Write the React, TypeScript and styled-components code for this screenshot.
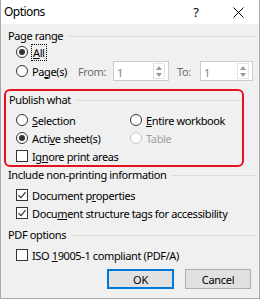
import React from "react";
import styled, { createGlobalStyle } from "styled-components";

const Global = createGlobalStyle`
  html, body { margin: 0; padding: 0; background: #ffffff; }
  body { font-family: "Noto Sans", "Open Sans", sans-serif; font-size: 11px; letter-spacing: -0.38px; color: #000; }
  * { box-sizing: border-box; }
`;

const Window = styled.div`
  width: 260px;
  height: 299px;
  background: #f0f0f0;
  border: 1px solid #a9a9a9;
  border-top: none;
  display: flex;
  flex-direction: column;
`;

const TitleBar = styled.div`
  height: 24px;
  background: #ffffff;
  display: flex;
  align-items: center;
  padding-left: 3px;
  flex: none;
`;

const Title = styled.div`
  flex: 1;
  font-size: 12px;
  letter-spacing: -0.55px;
  line-height: 14px;
`;

const TitleBtn = styled.div<{ $w: number }>`
  width: ${(p) => p.$w}px;
  height: 24px;
  display: flex;
  align-items: center;
  justify-content: center;
  font-size: 13px;
`;

const Body = styled.div`
  display: flex;
  flex-direction: column;
  padding: 5px 3px 0 6px;
`;

const GroupHeader = styled.div<{ $mt?: number }>`
  height: 14px;
  margin-top: ${(p) => p.$mt ?? 0}px;
  display: flex;
  align-items: center;
  gap: 5px;
  padding-left: 1px;
  line-height: 14px;
  white-space: nowrap;
  &::after {
    content: "";
    flex: 1;
    height: 1px;
    background: #dcdcdc;
    margin-top: 1px;
  }
`;

const Row = styled.div<{ $mt?: number; $h?: number }>`
  height: ${(p) => p.$h ?? 18}px;
  margin-top: ${(p) => p.$mt ?? 0}px;
  display: flex;
  align-items: center;
  padding-left: 9px;
  white-space: nowrap;
`;

const Slot = styled.div<{ $w: number }>`
  width: ${(p) => p.$w}px;
  flex: none;
  display: flex;
  align-items: center;
`;

const Highlight = styled.div`
  margin: 8px 0 0 -3px;
  width: 240px;
  border: 2px solid #e81123;
  border-radius: 6px;
  padding: 2px 0 0 2px;
  display: flex;
  flex-direction: column;
`;

const PubGrid = styled.div`
  margin-top: 4px;
  display: grid;
  grid-template-columns: 114px 112px;
  grid-auto-rows: 18px;
  padding-left: 8px;
`;

const Opt = styled.label<{ $disabled?: boolean }>`
  display: flex;
  align-items: center;
  gap: 4px;
  white-space: nowrap;
  color: ${(p) => (p.$disabled ? "#a0a0a0" : "#000")};
`;

const RadioCircle = styled.span<{ $checked?: boolean; $disabled?: boolean }>`
  width: 12px;
  height: 12px;
  border-radius: 50%;
  border: 1px solid ${(p) => (p.$disabled ? "#c4c4c4" : "#333333")};
  background: #ffffff;
  display: flex;
  align-items: center;
  justify-content: center;
  flex: none;
  &::after {
    content: "";
    width: 6px;
    height: 6px;
    border-radius: 50%;
    background: #333333;
    display: ${(p) => (p.$checked ? "block" : "none")};
  }
`;

const CheckBox = styled.span`
  width: 12px;
  height: 12px;
  border: 1px solid #333333;
  background: #ffffff;
  display: flex;
  align-items: center;
  justify-content: center;
  flex: none;
`;

const Focus = styled.span`
  outline: 1px dotted #000;
  outline-offset: 0px;
  padding: 0 1px;
`;

const Dim = styled.span`
  color: #6d6d6d;
`;

const Spin = styled.div<{ $w: number }>`
  width: ${(p) => p.$w}px;
  height: 20px;
  border: 1px solid #cccccc;
  background: #ffffff;
  display: flex;
  align-items: center;
  padding: 1px 3px 1px 3px;
  color: #838383;
  flex: none;
`;

const SpinText = styled.span`
  flex: 1;
  padding-top: 2px;
`;

const SpinBtns = styled.div`
  width: 12px;
  height: 16px;
  border: 1px solid #e3e3e3;
  display: flex;
  flex-direction: column;
  align-items: center;
  justify-content: space-around;
`;

const Buttons = styled.div`
  margin-top: 5px;
  display: flex;
  justify-content: flex-end;
  gap: 11px;
  padding-right: 5px;
`;

const Btn = styled.button<{ $default?: boolean }>`
  width: ${(p) => (p.$default ? 67 : 66)}px;
  height: 20px;
  font-family: inherit;
  font-size: 11px;
  letter-spacing: -0.3px;
  padding: 0;
  background: #e1e1e1;
  border: ${(p) => (p.$default ? "2px solid #0078d7" : "1px solid #adadad")};
  color: #000;
`;

const Check = () => (
  <svg width="10" height="10" viewBox="0 0 10 10">
    <path d="M1.5 5.2 L4 7.6 L8.6 2.2" fill="none" stroke="#333" strokeWidth="1.2" />
  </svg>
);

const Tri = ({ up }: { up?: boolean }) => (
  <svg width="6" height="4" viewBox="0 0 6 4">
    <path d={up ? "M0 4 L3 0 L6 4 Z" : "M0 0 L3 4 L6 0 Z"} fill="#9a9a9a" />
  </svg>
);

const SpinBox = ({ w }: { w: number }) => (
  <Spin $w={w}>
    <SpinText>1</SpinText>
    <SpinBtns>
      <Tri up />
      <Tri />
    </SpinBtns>
  </Spin>
);

const Radio = ({ checked, disabled, children }: { checked?: boolean; disabled?: boolean; children: React.ReactNode }) => (
  <Opt $disabled={disabled}>
    <RadioCircle $checked={checked} $disabled={disabled} />
    <span>{children}</span>
  </Opt>
);

const Checkbox = ({ checked, children }: { checked?: boolean; children: React.ReactNode }) => (
  <Opt>
    <CheckBox>{checked && <Check />}</CheckBox>
    <span>{children}</span>
  </Opt>
);

export default function App() {
  return (
    <>
      <Global />
      <Window>
        <TitleBar>
          <Title>Options</Title>
          <TitleBtn $w={42}>?</TitleBtn>
          <TitleBtn $w={42}>
            <svg width="11" height="11" viewBox="0 0 11 11">
              <path d="M0.5 0.5 L10.5 10.5 M10.5 0.5 L0.5 10.5" stroke="#000" strokeWidth="1" />
            </svg>
          </TitleBtn>
        </TitleBar>
        <Body>
          <GroupHeader>Page range</GroupHeader>
          <Row>
            <Radio checked>
              <Focus><u>A</u>ll</Focus>
            </Radio>
          </Row>
          <Row $h={20}>
            <Slot $w={62}>
              <Radio>
                Pa<u>g</u>e(s)
              </Radio>
            </Slot>
            <Slot $w={35}>
              <Dim>From:</Dim>
            </Slot>
            <SpinBox w={56} />
            <Slot $w={8} />
            <Slot $w={23}>
              <Dim>To:</Dim>
            </Slot>
            <SpinBox w={53} />
          </Row>
          <Highlight>
            <GroupHeader>Publish what</GroupHeader>
            <PubGrid>
              <Radio>
                <u>S</u>election
              </Radio>
              <Radio>
                <u>E</u>ntire workbook
              </Radio>
              <Radio checked>
                Acti<u>v</u>e sheet(s)
              </Radio>
              <Radio disabled>Table</Radio>
              <Checkbox>
                Ig<u>n</u>ore print areas
              </Checkbox>
            </PubGrid>
          </Highlight>
          <GroupHeader $mt={1}>Include non-printing information</GroupHeader>
          <Row $mt={4}>
            <Checkbox checked>
              Document p<u>r</u>operties
            </Checkbox>
          </Row>
          <Row>
            <Checkbox checked>
              Docu<u>m</u>ent structure tags for accessibility
            </Checkbox>
          </Row>
          <GroupHeader $mt={6}>PDF options</GroupHeader>
          <Row $mt={4}>
            <Checkbox>
              ISO <u>1</u>9005-1 compliant (PDF/A)
            </Checkbox>
          </Row>
          <Buttons>
            <Btn $default>OK</Btn>
            <Btn>Cancel</Btn>
          </Buttons>
        </Body>
      </Window>
    </>
  );
}
